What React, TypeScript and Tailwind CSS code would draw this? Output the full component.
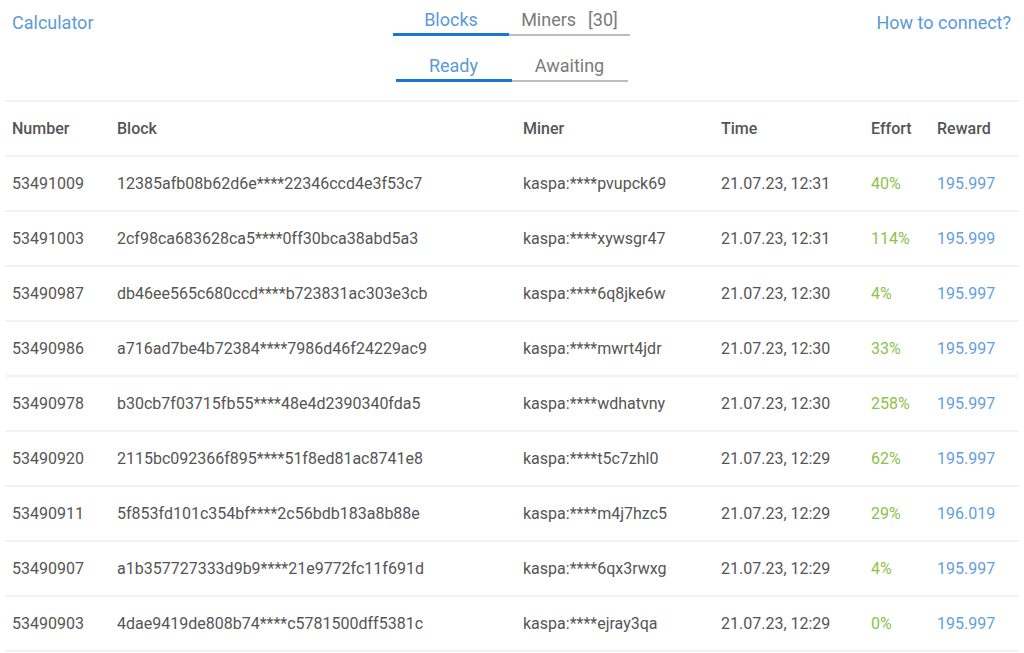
const rows = [
  ["53491009", "12385afb08b62d6e****22346ccd4e3f53c7", "kaspa:****pvupck69", "21.07.23, 12:31", "40%", "195.997"],
  ["53491003", "2cf98ca683628ca5****0ff30bca38abd5a3", "kaspa:****xywsgr47", "21.07.23, 12:31", "114%", "195.999"],
  ["53490987", "db46ee565c680ccd****b723831ac303e3cb", "kaspa:****6q8jke6w", "21.07.23, 12:30", "4%", "195.997"],
  ["53490986", "a716ad7be4b72384****7986d46f24229ac9", "kaspa:****mwrt4jdr", "21.07.23, 12:30", "33%", "195.997"],
  ["53490978", "b30cb7f03715fb55****48e4d2390340fda5", "kaspa:****wdhatvny", "21.07.23, 12:30", "258%", "195.997"],
  ["53490920", "2115bc092366f895****51f8ed81ac8741e8", "kaspa:****t5c7zhl0", "21.07.23, 12:29", "62%", "195.997"],
  ["53490911", "5f853fd101c354bf****2c56bdb183a8b88e", "kaspa:****m4j7hzc5", "21.07.23, 12:29", "29%", "196.019"],
  ["53490907", "a1b357727333d9b9****21e9772fc11f691d", "kaspa:****6qx3rwxg", "21.07.23, 12:29", "4%", "195.997"],
  ["53490903", "4dae9419de808b74****c5781500dff5381c", "kaspa:****ejray3qa", "21.07.23, 12:29", "0%", "195.997"],
];

const cols = "grid grid-cols-[105px_406px_198px_150px_66px_1fr] items-center pl-[7px]";

function Tab({ label, active, width }: { label: string; active?: boolean; width: string }) {
  return (
    <div
      className={
        width +
        " flex justify-center " +
        (active
          ? "border-b-[3px] border-[#1976d2] text-[#5b9ad8]"
          : "border-b-2 border-[#bdbdbd] text-[#7a7a7a]")
      }
    >
      {label}
    </div>
  );
}

export default function App() {
  return (
    <div className="w-[1024px] bg-white font-['Roboto',sans-serif] text-[#555]">
      {/* 상단 */}
      <div className="grid grid-cols-[1fr_auto_1fr] items-start pl-3 pr-[13px]">
        <a className="mt-[11px] justify-self-start text-[18px] leading-6 text-[#5b9ad8]">Calculator</a>
        <div className="flex flex-col items-center text-[18px] leading-6">
          <div className="flex h-9 items-end">
            <Tab label="Blocks" active width="w-[116px] h-[36px] pt-[8px]" />
            <div className="flex h-[36px] w-[121px] justify-center gap-[12px] border-b-2 border-[#bdbdbd] pt-[8px] text-[#7a7a7a]">
              <span>Miners</span>
              <span>[30]</span>
            </div>
          </div>
          <div className="mt-[18px] flex items-end">
            <Tab label="Ready" active width="w-[116px] h-[28px]" />
            <Tab label="Awaiting" width="w-[116px] h-[28px]" />
          </div>
        </div>
        <a className="mt-[11px] justify-self-end text-[18px] leading-6 text-[#5b9ad8]">How to connect?</a>
      </div>

      {/* 테이블 */}
      <div className="mx-[5px] mt-[18px] border-b-2 border-[#f2f2f2] text-[16px]">
        <div className={cols + " h-[55px] border-t-2 border-[#f2f2f2] font-medium text-[#555]"}>
          <div>Number</div>
          <div>Block</div>
          <div>Miner</div>
          <div>Time</div>
          <div>Effort</div>
          <div>Reward</div>
        </div>
        {rows.map((r) => (
          <div key={r[0]} className={cols + " h-[55px] border-t-2 border-[#f2f2f2]"}>
            <div>{r[0]}</div>
            <div>{r[1]}</div>
            <div>{r[2]}</div>
            <div>{r[3]}</div>
            <div className="text-[#8bc34a]">{r[4]}</div>
            <div className="text-[#64a0dc]">{r[5]}</div>
          </div>
        ))}
      </div>
    </div>
  );
}
